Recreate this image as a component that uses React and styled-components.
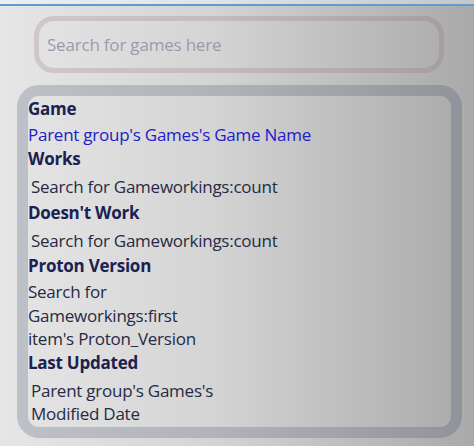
import React from "react";
import styled, { createGlobalStyle } from "styled-components";

const Global = createGlobalStyle`
  html, body { margin: 0; padding: 0; }
  body {
    width: 474px;
    height: 446px;
    overflow: hidden;
    font-family: "Open Sans", "Noto Sans", sans-serif;
    background: linear-gradient(90deg, #e6e6e6 0%, #d4d4d4 45%, #a9a9a9 100%);
  }
`;

const Page = styled.div`
  width: 474px;
  height: 446px;
  box-sizing: border-box;
  display: flex;
  flex-direction: column;
`;

const TopStrip = styled.div`
  height: 4px;
  background: rgba(255, 255, 255, 0.35);
  border-bottom: 2px solid #5e9bd3;
`;

const SearchWrap = styled.div`
  padding: 10px 30px 0 34px;
`;

const SearchBox = styled.input`
  box-sizing: border-box;
  width: 410px;
  height: 57px;
  border: 5px solid rgba(140, 100, 100, 0.22);
  border-radius: 20px;
  background: transparent;
  padding: 0 0 0 8px;
  font-family: "Open Sans", sans-serif;
  font-size: 17px;
  letter-spacing: -0.2px;
  color: #333;
  outline: none;
  &::placeholder { color: #9b9aab; }
`;

const Card = styled.div`
  box-sizing: border-box;
  margin: 12px 12px 0 17px;
  width: 445px;
  height: 353px;
  border: 11px solid rgba(55, 62, 100, 0.22);
  border-radius: 22px;
  padding: 1px 0 0 0;
  display: flex;
  flex-direction: column;
  letter-spacing: -0.25px;
`;

const Label = styled.div`
  font-weight: 700;
  font-size: 17px;
  line-height: 24px;
  color: #1b2150;
`;

const Value = styled.div`
  font-size: 17px;
  line-height: 23.5px;
  color: ${(p) => (p.$link ? "#2020c8" : "#262a45")};
  padding-left: ${(p) => (p.$indent ? "3px" : "0")};
  margin-top: ${(p) => p.$mt || 0}px;
  margin-bottom: ${(p) => p.$mb || 0}px;
  max-width: ${(p) => (p.$narrow ? "190px" : "none")};
`;

export default function App() {
  return (
    <>
      <Global />
      <Page>
        <TopStrip />
        <SearchWrap>
          <SearchBox placeholder="Search for games here" />
        </SearchWrap>
        <Card>
          <Label>Game</Label>
          <Value $link $mt={2}>Parent group's Games's Game Name</Value>
          <Label>Works</Label>
          <Value $indent $mt={4} $mb={3}>Search for Gameworkings:count</Value>
          <Label>Doesn't Work</Label>
          <Value $indent $mt={4} $mb={1.5}>Search for Gameworkings:count</Value>
          <Label>Proton Version</Label>
          <Value $narrow $mt={2}>Search for Gameworkings:first item's Proton_Version</Value>
          <Label>Last Updated</Label>
          <Value $indent $mt={4} $narrow>Parent group's Games's Modified Date</Value>
        </Card>
      </Page>
    </>
  );
}
